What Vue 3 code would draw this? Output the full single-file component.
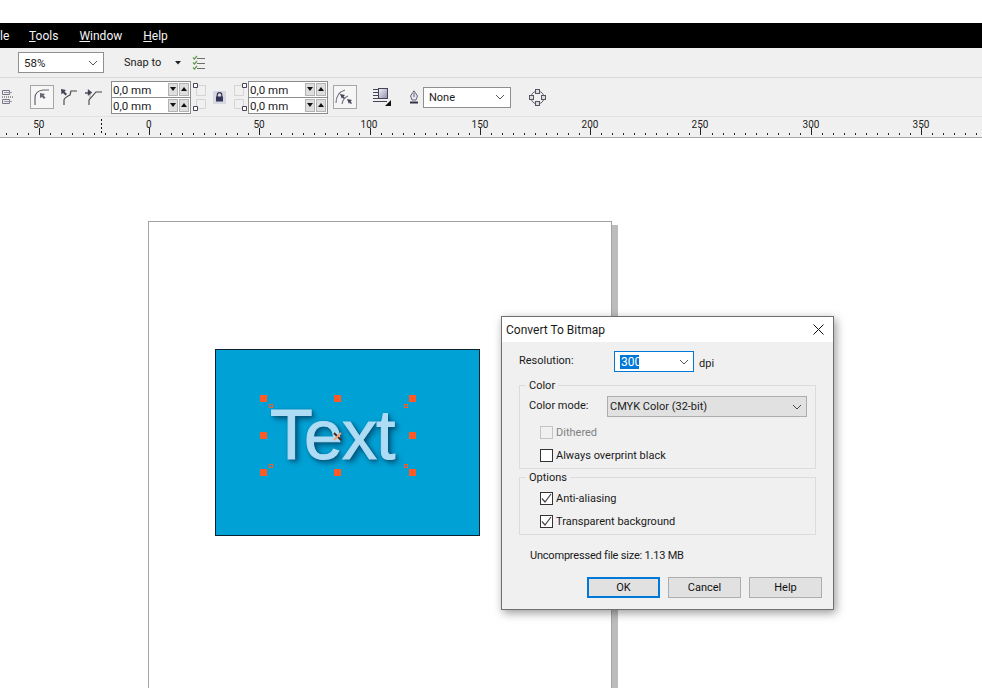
<script setup>
const tickCount = 90
const ticks = Array.from({ length: tickCount }, (_, i) => {
  const x = 5.6 + i * 11.03
  return { x, major: (i % 10) === 3 }
})
const labels = [
  { x: 38.8, t: '50' }, { x: 148.7, t: '0' }, { x: 259, t: '50' }, { x: 369, t: '100' },
  { x: 480, t: '150' }, { x: 590, t: '200' }, { x: 700, t: '250' }, { x: 811, t: '300' }, { x: 921, t: '350' }
]
const handles = []
for (const x of [263, 337, 412]) {
  for (const y of [398, 435, 472]) {
    if (!(x === 337 && y === 435)) handles.push({ left: x - 3 + 'px', top: y - 3 + 'px' })
  }
}
const rotators = []
for (const x of [271, 406]) {
  for (const y of [406, 466]) rotators.push({ left: x - 2 + 'px', top: y - 2 + 'px' })
}
</script>

<template>
  <div class="app">
    <div class="top-gap"></div>
    <nav class="menu">
      <span class="clip">le</span>
      <span><u>T</u>ools</span>
      <span class="m-window"><u>W</u>indow</span>
      <span class="m-help"><u>H</u>elp</span>
    </nav>

    <div class="bar1">
      <div class="field zoom-field"><span>58%</span>
        <svg class="chev" width="10" height="6" viewBox="0 0 10 6"><path d="M1 1l4 4 4-4" fill="none" stroke="#555" /></svg>
      </div>
      <span class="snap">Snap to</span>
      <svg class="snap-arrow" width="6" height="4" viewBox="0 0 6 4"><path d="M0 0h6L3 3.5z" fill="#222" /></svg>
      <svg class="snap-icon" width="14" height="16" viewBox="0 0 14 16">
        <g fill="none" stroke="#5f9f4a" stroke-width="1.200">
          <path d="M1 2.500l1.500 1.500L5 1M1 7.500l1.500 1.500L5 6M1 12.500l1.500 1.500L5 11" />
        </g>
        <path d="M5 3.500h8M5 8.500h8M5 13.500h8" stroke="#6e6e6e" />
      </svg>
    </div>

    <div class="bar2">
      <svg class="i-clip" width="12" height="16" viewBox="0 0 12 16">
        <path d="M.5 1.500h7v4h-7zM.5 10.500h7v4h-7z" fill="#ececec" stroke="#778" />
        <path d="M2 3.500h8M2 12.500h8" stroke="#99a" />
        <path d="M0 8h12" stroke="#444" stroke-dasharray="1 1" />
      </svg>
      <button class="tool-btn b-round">
        <svg width="18" height="18" viewBox="0 0 18 18">
          <path d="M2 17V10Q2 3 10 2h6" fill="none" stroke="#666" stroke-width="1.200" />
          <path d="M7 5l5 1-1.500 1.500 2 2-1.500 1.500-2-2L7 10z" fill="#667" />
        </svg>
      </button>
      <svg class="i-corner1" width="18" height="18" viewBox="0 0 18 18">
        <path d="M4 17v-5q0-2 6-5l1-4h6" fill="none" stroke="#444" stroke-width="1.100" />
        <path d="M1 1l5 1-1.500 1.500L7 6l-1.500 1.500L3 5 1.500 6.500z" fill="#445" />
      </svg>
      <svg class="i-corner2" width="18" height="18" viewBox="0 0 18 18">
        <path d="M4 17v-5l7-8h6" fill="none" stroke="#444" stroke-width="1.100" />
        <path d="M0 4.500h3V1.500l4 3-4 3v-2H0zM5 4v6" fill="#445" stroke="#445" stroke-width=".4" />
      </svg>

      <div class="spin-pair s1">
        <div class="spin"><span>0,0 mm</span><i class="dn"></i><i class="up"></i></div>
        <div class="spin"><span>0,0 mm</span><i class="dn"></i><i class="up"></i></div>
      </div>
      <svg class="i-corners" width="14" height="28" viewBox="0 0 14 28">
        <path d="M3.500 2.500h9v10h-9zM3.500 16.500h9v9h-9z" fill="none" stroke="#d4d4d4" />
        <path d="M.5.500h4v4h-4zM.5 23.500h4v4h-4z" fill="#fff" stroke="#445" />
      </svg>
      <div class="lock">
        <svg width="9" height="10" viewBox="0 0 9 10">
          <path d="M2.200 5V3a2.300 2.300 0 0 1 4.600 0v2" fill="none" stroke="#335" stroke-width="1.200" />
          <rect x="1" y="4.500" width="7" height="5" fill="#335" />
        </svg>
      </div>
      <svg class="i-corners2" width="14" height="28" viewBox="0 0 14 28">
        <path d="M1.500 2.500h9v10h-9zM1.500 16.500h9v9h-9z" fill="none" stroke="#d4d4d4" />
        <path d="M9.500.5h4v4h-4zM9.500 23.500h4v4h-4z" fill="#fff" stroke="#445" />
      </svg>
      <div class="spin-pair s2">
        <div class="spin"><span>0,0 mm</span><i class="dn"></i><i class="up"></i></div>
        <div class="spin"><span>0,0 mm</span><i class="dn"></i><i class="up"></i></div>
      </div>
      <button class="tool-btn b-rel">
        <svg width="20" height="18" viewBox="0 0 20 18">
          <path d="M1 15q0-10 9-13M7 16q1-6 6-8" fill="none" stroke="#778" stroke-width="1.200" />
          <path d="M5 6l5 1-1.500 1.500 1.500 1.500-1 1-1.500-1.500L7 11zM12 11l5 1-1.500 1.500 1.500 1.500-1 1-1.500-1.500L14 16z" fill="#445" />
        </svg>
      </button>
      <svg class="i-wrap" width="19" height="18" viewBox="0 0 19 18">
        <defs>
          <linearGradient id="wg" x1="0" y1="0" x2="1" y2="1">
            <stop offset="0" stop-color="#f4f4fa" /><stop offset="1" stop-color="#8c8cb0" />
          </linearGradient>
        </defs>
        <path d="M0 1.500h5M0 4.500h5M0 7.500h5M0 10.500h5M0 13.500h14" stroke="#445" />
        <rect x="5.500" y=".5" width="9" height="10" fill="url(#wg)" stroke="#445" />
        <path d="M18 12v6h-6z" fill="#111" />
      </svg>
      <svg class="i-pen" width="10" height="14" viewBox="0 0 10 14">
        <path d="M5 .8L8.500 6 7 10H3L1.500 6z" fill="#e4e4ee" stroke="#667" />
        <path d="M5 3v4" stroke="#667" />
        <path d="M1 12.500h8" stroke="#334" stroke-width="2" />
      </svg>
      <div class="field none-field"><span>None</span>
        <svg class="chev" width="10" height="6" viewBox="0 0 10 6"><path d="M1 1l4 4 4-4" fill="none" stroke="#555" /></svg>
      </div>
      <svg class="i-node" width="17" height="17" viewBox="0 0 17 17">
        <circle cx="8.500" cy="8.500" r="6.500" fill="none" stroke="#667" />
        <g fill="#ddd" stroke="#556">
          <rect x="6.500" y=".5" width="4" height="4" /><rect x="6.500" y="12.500" width="4" height="4" />
          <rect x=".5" y="6.500" width="4" height="4" /><rect x="12.500" y="6.500" width="4" height="4" />
        </g>
      </svg>
    </div>

    <svg class="ruler" width="982" height="21" viewBox="0 0 982 21">
      <rect width="982" height="21" fill="#f0f0f0" />
      <path d="M0 20.500h982" stroke="#a8a8a8" />
      <path v-for="t in ticks" :key="t.x" :d="`M${Math.round(t.x) + 0.5} ${t.major ? 11 : 16}V18`" stroke="#222" />
      <path d="M101.500 2V18" stroke="#111" stroke-dasharray="2 2" />
      <text v-for="l in labels" :key="l.x" :x="l.x" y="11" text-anchor="middle" class="r-text">{{ l.t }}</text>
    </svg>

    <main class="canvas">
      <div class="page-shadow"></div>
      <div class="page"></div>
      <div class="rect"></div>
      <div class="word">Text</div>
      <span v-for="(h, i) in handles" :key="'h' + i" class="handle" :style="h"></span>
      <span v-for="(r, i) in rotators" :key="'r' + i" class="rot" :style="r"></span>
      <svg class="cross" width="9" height="9" viewBox="0 0 9 9">
        <path d="M1 1l7 7" stroke="#4a2412" stroke-width="1.800" />
        <path d="M8 1L1 8" stroke="#f4a078" stroke-width="1.800" />
      </svg>

      <section class="dialog">
        <header class="d-title">
          <span>Convert To Bitmap</span>
          <svg width="11" height="11" viewBox="0 0 11 11"><path d="M.5.500l10 10M10.500.500l-10 10" stroke="#111" /></svg>
        </header>
        <div class="d-body">
          <div class="res-row">
            <label class="res-label">Resolution:</label>
            <div class="res-combo"><em>300</em>
              <svg class="chev" width="10" height="6" viewBox="0 0 10 6"><path d="M1 1l4 4 4-4" fill="none" stroke="#555" /></svg>
            </div>
            <span class="dpi">dpi</span>
          </div>

          <fieldset class="group g-color">
            <legend>Color</legend>
            <div class="mode-row">
              <label class="mode-label">Color mode:</label>
              <div class="mode-select"><span>CMYK Color (32-bit)</span>
                <svg class="chev" width="10" height="6" viewBox="0 0 10 6"><path d="M1 1l4 4 4-4" fill="none" stroke="#444" /></svg>
              </div>
            </div>
            <div class="check off"><i></i><span>Dithered</span></div>
            <div class="check"><i></i><span>Always overprint black</span></div>
          </fieldset>

          <fieldset class="group g-options">
            <legend>Options</legend>
            <div class="check on"><i><svg width="11" height="11" viewBox="0 0 11 11"><path d="M1 5.500l3 3.500 6-8" fill="none" stroke="#444" stroke-width="1.200" /></svg></i><span>Anti-aliasing</span></div>
            <div class="check on"><i><svg width="11" height="11" viewBox="0 0 11 11"><path d="M1 5.500l3 3.500 6-8" fill="none" stroke="#444" stroke-width="1.200" /></svg></i><span>Transparent background</span></div>
          </fieldset>

          <p class="size">Uncompressed file size: 1.13 MB</p>

          <div class="actions">
            <button class="d-btn primary">OK</button>
            <button class="d-btn">Cancel</button>
            <button class="d-btn">Help</button>
          </div>
        </div>
      </section>
    </main>
  </div>
</template>

<style>
html, body { margin: 0; background: #fff; }
</style>

<style scoped>
.app {
  width: 982px; height: 688px; overflow: hidden; display: flex; flex-direction: column;
  font-family: Roboto, "Open Sans", sans-serif; font-size: 11px; color: #1a1a1a; background: #fff;
}
.top-gap { height: 23px; flex: none; }
.menu {
  flex: none; height: 25px; background: #000; color: #f4f4f4; display: flex; align-items: center;
  font-size: 12px; gap: 21px;
}
.clip { width: 8px; }
.bar1 {
  flex: none; height: 29px; background: #f0f0f0; border-bottom: 1px solid #d9d9d9;
  display: flex; align-items: center; padding-left: 18px;
}
.field {
  box-sizing: border-box; height: 21px; background: #fff; border: 1px solid #8f8f8f;
  display: flex; align-items: center; justify-content: space-between; padding: 0 5px;
  font-size: 11.500px;
}
.zoom-field { width: 86px; }
.snap { margin-left: 20px; font-size: 11px; width: 51px; }
.snap-arrow { margin-right: 11px; }
.bar2 {
  flex: none; height: 38px; background: #f0f0f0; border-bottom: 1px solid #e2e2e2;
  display: flex; align-items: center; padding-left: 2px;
}
.tool-btn {
  box-sizing: border-box; width: 24px; height: 24px; padding: 0; background: #f6f6f6;
  border: 1px solid #a6a6a6; display: flex; align-items: center; justify-content: center;
}
.b-round { margin-left: 16px; }
.i-corner1 { margin-left: 6px; }
.i-corner2 { margin-left: 7px; }
.spin-pair { box-sizing: border-box; width: 80px; height: 33px; border: 1px solid #8c8c8c; background: #fff; display: flex; flex-direction: column; flex: none; margin-top: 1px; }
.s1 { margin-left: 8px; }
.s2 { margin-left: 1px; }
.spin { flex: 1; display: flex; align-items: center; font-size: 11.500px; padding-left: 1px; background: #fff; }
.spin + .spin { border-top: 1px solid #8c8c8c; }
.spin span { flex: 1; }
.spin i {
  box-sizing: border-box; width: 10px; height: 13px; background: #dedede; border: 1px solid #b4b4b4; margin-right: 1px; position: relative; flex: none;
}
.spin i::after {
  content: ""; position: absolute; left: 1px; width: 0; height: 0;
  border-left: 3px solid transparent; border-right: 3px solid transparent;
}
.spin i.dn::after { top: 3px; border-top: 4px solid #111; }
.spin i.up::after { top: 3px; border-bottom: 4px solid #111; }
.i-corners { margin-left: 2px; }
.lock {
  margin-left: 6px; width: 13px; height: 13px; background: #d8d8e2; display: flex; align-items: center; justify-content: center;
}
.i-corners2 { margin-left: 7px; }
.b-rel { margin-left: 5px; }
.i-wrap { margin-left: 16px; }
.i-pen { margin-left: 17px; }
.none-field { width: 88px; margin-left: 4px; font-size: 11px; }
.i-node { margin-left: 18px; }
.ruler { flex: none; display: block; }
.r-text { font-family: Roboto, sans-serif; font-size: 10px; fill: #222; }
.canvas { flex: 1; position: relative; }
.page-shadow { position: absolute; left: 612px; top: 87px; width: 6px; height: 500px; background: #bcbcbc; }
.page { position: absolute; left: 148px; top: 83px; width: 464px; height: 500px; box-sizing: border-box; border: 1px solid #a3a3a3; background: #fff; }
.rect { position: absolute; left: 215px; top: 211px; width: 265px; height: 187px; box-sizing: border-box; border: 1px solid #0b2230; background: #00a2d6; }
.word {
  position: absolute; left: 270px; top: 257px; font-family: "Liberation Sans", Arial, sans-serif; font-size: 70px; line-height: 80px;
  color: #aedcf4; -webkit-text-stroke: 1px #aedcf4; text-shadow: 1px 1px 3px #034c70, 3px 3px 6px #034c70; letter-spacing: -1px;
}
.handle { position: absolute; width: 7px; height: 7px; background: #ff5a26; margin-top: -138px; }
.rot { position: absolute; width: 4px; height: 4px; box-sizing: border-box; border: 1px solid #ff5a26; margin-top: -138px; }
.cross { position: absolute; left: 333px; top: 294px; }

.dialog {
  position: absolute; left: 501px; top: 178px; width: 333px; height: 294px; box-sizing: border-box;
  border: 1px solid #6f6f6f; background: #f0f0f0; box-shadow: 2px 3px 9px rgba(0, 0, 0, .4);
  display: flex; flex-direction: column;
}
.d-title {
  flex: none; height: 25px; background: #fff; display: flex; align-items: center; justify-content: space-between;
  padding: 0 9px 0 4px; font-size: 12px;
}
.d-body { flex: 1; padding: 9px 11px 0 17px; display: flex; flex-direction: column; }
.res-row { display: flex; align-items: center; height: 21px; }
.res-label { width: 95px; margin-top: -3px; }
.res-combo {
  box-sizing: border-box; width: 80px; height: 21px; background: #fff; border: 1px solid #0078d7;
  display: flex; align-items: center; justify-content: space-between; padding: 0 4px 0 5px;
}
.res-combo em { font-style: normal; background: #0078d7; color: #fff; padding: 0 1px; line-height: 14px; width: 19px; box-sizing: border-box; font-size: 12px; }
.dpi { margin-left: 5px; margin-top: 3px; }
.group { box-sizing: border-box; margin: 0; padding: 0; border: 1px solid #dcdcdc; width: 297px; }
.group legend { margin-left: 6px; padding: 2px 3px 0; line-height: 14px; }
.g-color { margin-top: 5px; height: 92px; }
.g-options { height: 66px; }
.mode-row { display: flex; align-items: center; padding-left: 9px; height: 21px; margin-top: 3px; }
.mode-label { width: 78px; margin-top: -3px; }
.mode-select {
  box-sizing: border-box; width: 200px; height: 21px; background: #e1e1e1; border: 1px solid #adadad;
  display: flex; align-items: center; justify-content: space-between; padding: 0 4px 0 2px;
}
.check { display: flex; align-items: center; height: 23px; padding-left: 20px; }
.g-color .off { margin-top: 4px; }
.check i {
  box-sizing: border-box; width: 13px; height: 13px; border: 1px solid #333; background: #fff; margin-right: 3px;
  display: flex; align-items: center; justify-content: center; flex: none;
}
.check.off i { border-color: #c4c4c4; background: #f0f0f0; }
.check.off span { color: #7f7f7f; }
.g-options .check:first-of-type { margin-top: 2px; }
.size { margin: 13px 0 0 11px; line-height: 16px; letter-spacing: -.2px; }
.actions { display: flex; gap: 8px; margin: 13px 0 0 68px; }
.d-btn {
  box-sizing: border-box; width: 73px; height: 21px; padding: 0; background: #e1e1e1; border: 1px solid #adadad;
  font: inherit; color: #111;
}
.d-btn.primary { border: 2px solid #0078d7; }
</style>
